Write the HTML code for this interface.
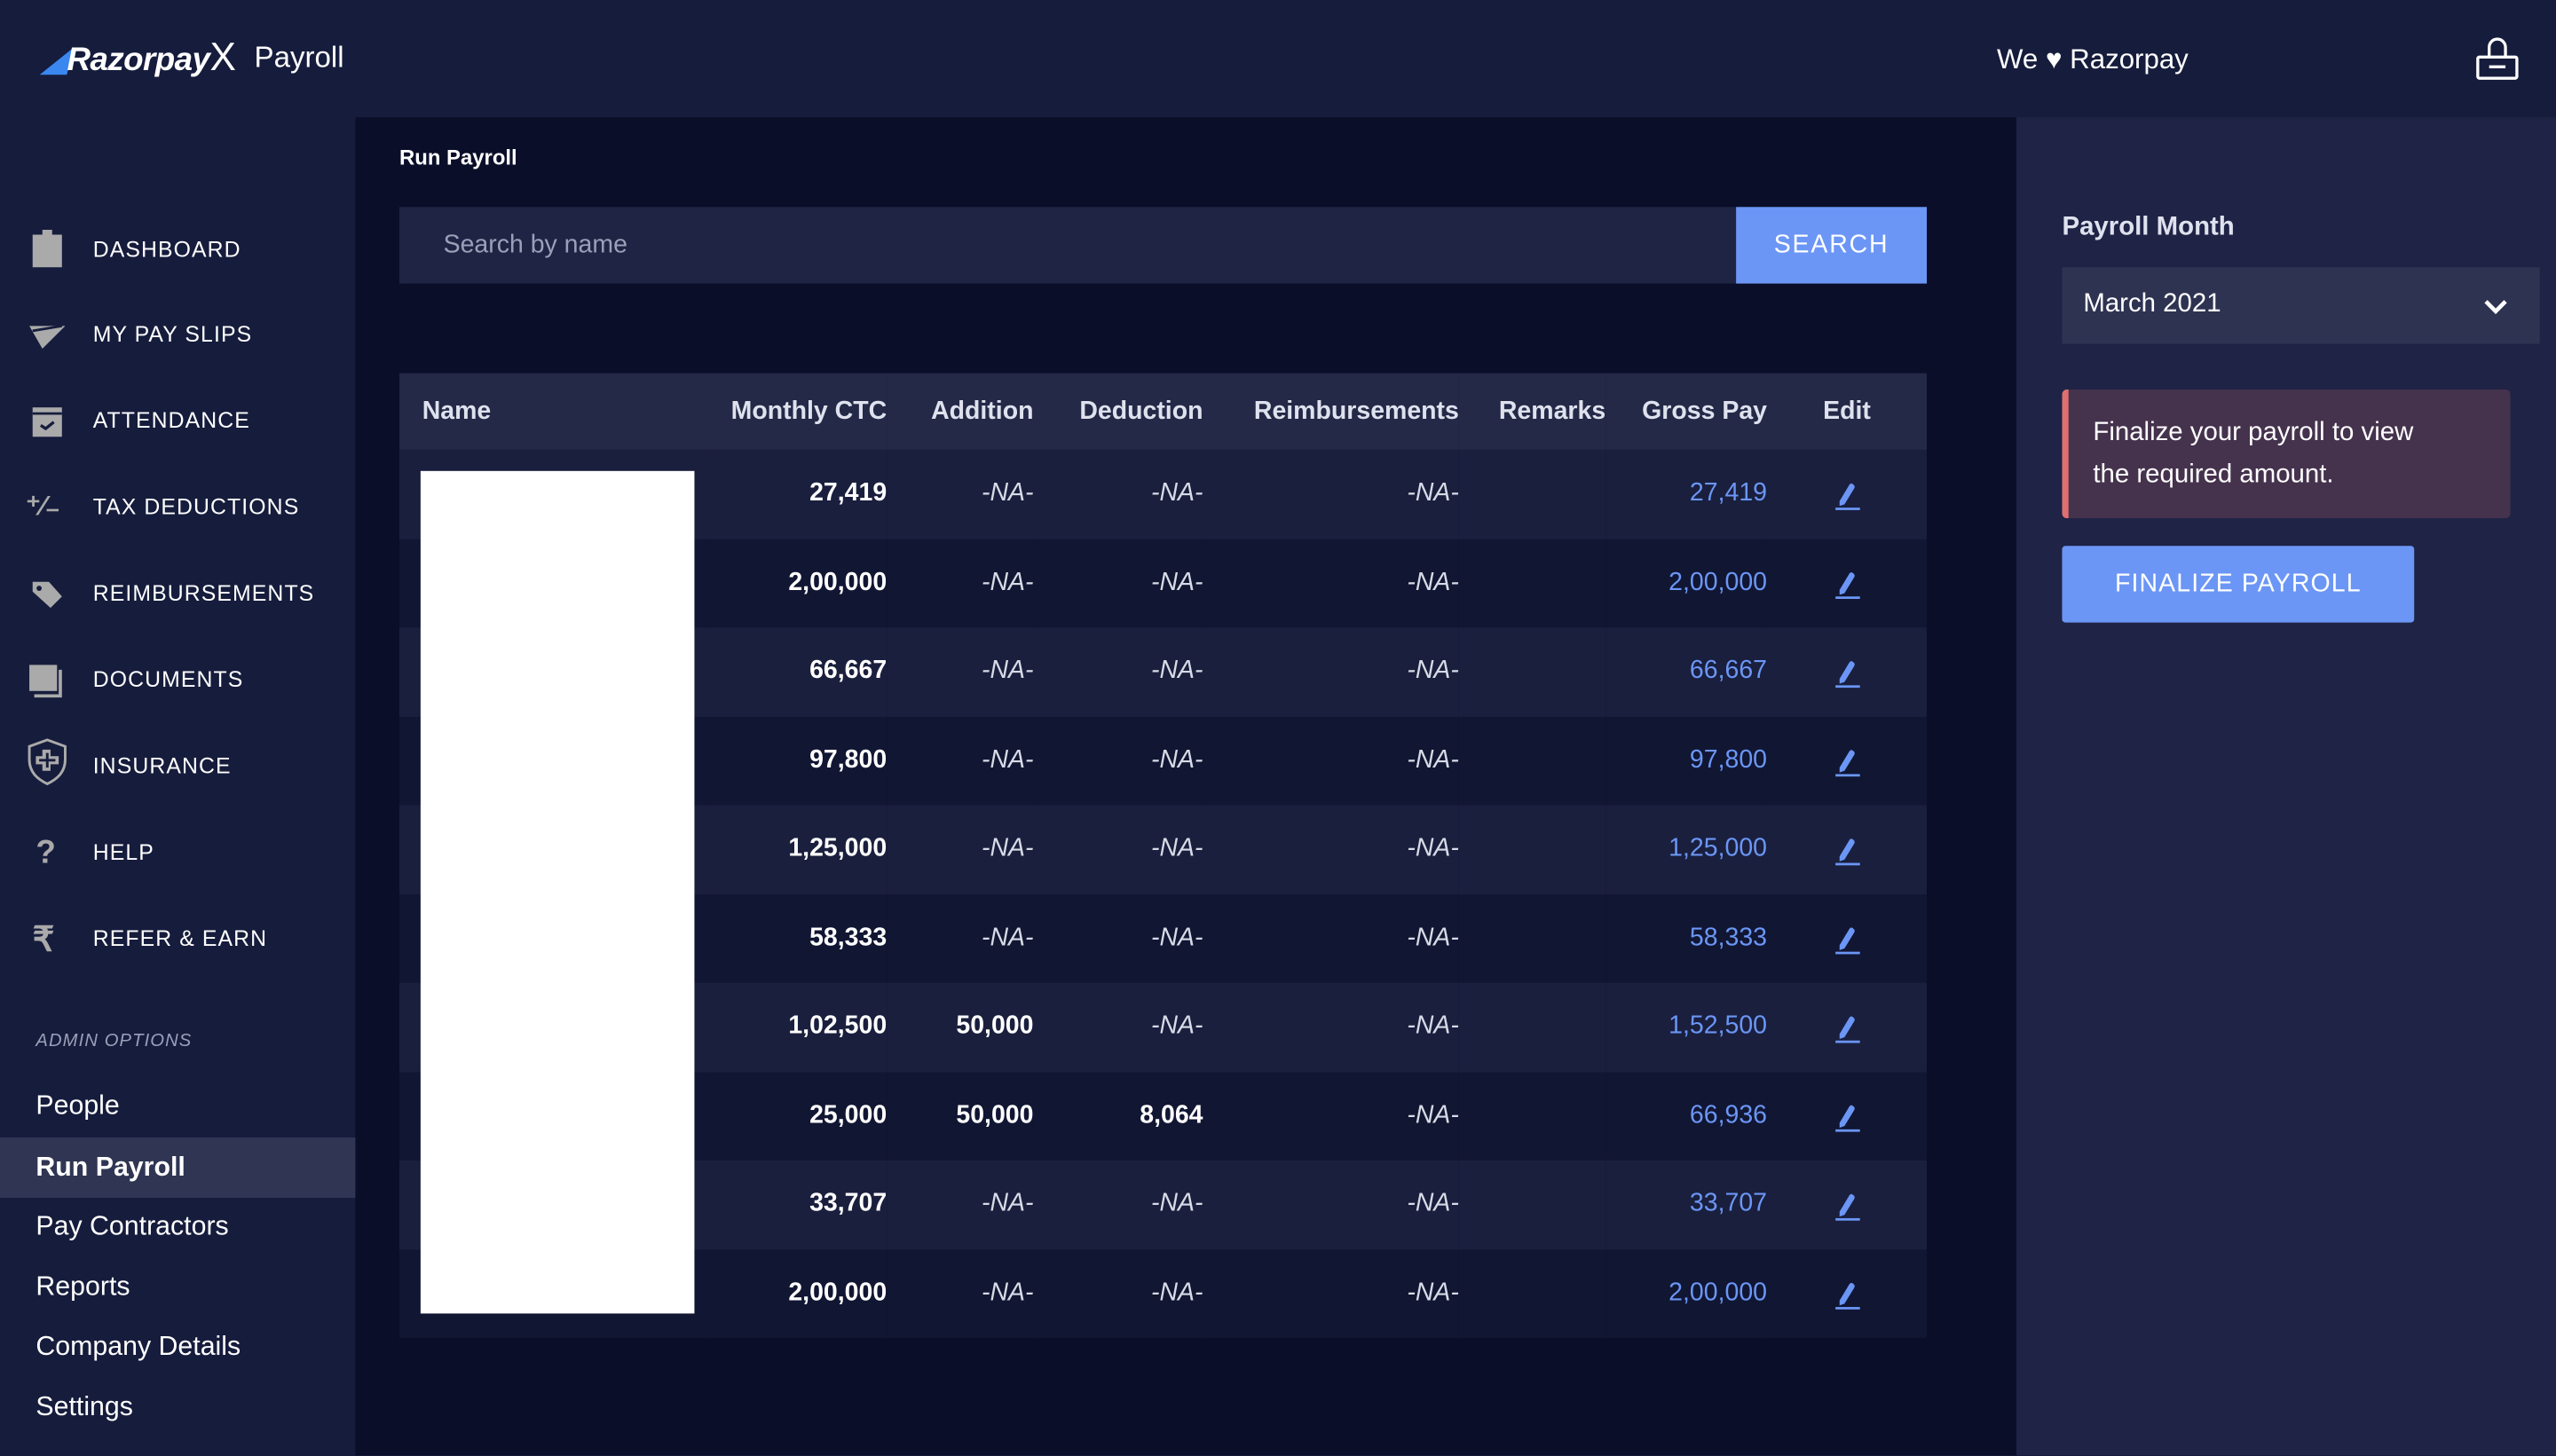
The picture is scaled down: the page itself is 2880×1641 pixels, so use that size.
<!DOCTYPE html>
<html><head><meta charset="utf-8"><style>
*{margin:0;padding:0;box-sizing:border-box}
html,body{width:2880px;height:1641px;overflow:hidden;background:#161c3c}
#w{width:1568px;height:893px;transform:scale(1.836735);transform-origin:0 0;position:relative;font-family:"Liberation Sans",sans-serif;color:#fff;background:#161c3c}
.a{position:absolute}
.nav{position:absolute;left:57px;font-size:13.5px;letter-spacing:0.6px;transform:translateY(-50%)}
.ic{position:absolute;left:16px;width:26px;transform:translateY(-50%)}
.adm{position:absolute;left:22px;font-size:16.5px;transform:translateY(-50%)}
table{border-collapse:collapse;position:absolute;left:245px;top:229px;width:937px}
td,th{height:54.5px;font-size:15.5px;text-align:right;padding:0}
th{height:47px;background:#242947;font-weight:bold;color:#dfe2ee}
tr:nth-child(even) td{background:#1a1f3e}
tr:nth-child(odd) td{background:#111633}
td{font-weight:bold}
td.na{font-style:italic;font-weight:normal;color:#d8dbe6}
td.g{color:#6b96f5;font-weight:normal}
</style></head><body><div id="w">
<div class="a" style="left:26px;top:22px;font-size:20px;font-weight:bold;font-style:italic;letter-spacing:-0.3px">
<span style="color:#3a87f0">◢</span>Razorpay<span style="color:#fff;font-style:normal;font-size:24px;font-weight:normal">X</span></div>
<div class="a" style="left:156px;top:25px;font-size:18px">Payroll</div>
<div class="a" style="left:1225px;top:27px;font-size:17px">We ♥ Razorpay</div>
<svg class="a" style="left:1518px;top:22px" width="28" height="28" viewBox="0 0 28 28" fill="none" stroke="#fff" stroke-width="1.8"><rect x="2" y="13" width="24" height="13" rx="1"/><path d="M9 13V7a5 5 0 0 1 10 0v6M9 19h10"/></svg>
<div class="a" style="left:218px;top:72px;width:1019px;height:821px;background:#0a0e29"></div>
<div class="a" style="left:1237px;top:72px;width:331px;height:821px;background:#1f2345"></div>
<svg class="ic" style="top:153px" width="26" height="24" viewBox="0 0 26 24"><rect x="4" y="3" width="18" height="20" fill="#aaa"/><rect x="10" y="0" width="6" height="4" fill="#aaa"/></svg>
<div class="nav" style="top:153px">DASHBOARD</div>
<svg class="ic" style="top:207px" width="26" height="18" viewBox="0 0 26 18"><path d="M2 2h22L10 16z" fill="#aaa"/><path d="M4 5l18-3" stroke="#161c3c" stroke-width="1.5"/></svg>
<div class="nav" style="top:205px">MY PAY SLIPS</div>
<svg class="ic" style="top:259px" width="26" height="20" viewBox="0 0 26 20"><rect x="4" y="1" width="18" height="18" fill="#aaa"/><rect x="4" y="4" width="18" height="1.5" fill="#161c3c"/><path d="M9 12l3 2 5-4" stroke="#161c3c" stroke-width="1.8" fill="none"/></svg>
<div class="nav" style="top:258px">ATTENDANCE</div>
<div class="ic" style="top:311px;color:#aaa;font-weight:bold;font-size:17px">⁺⁄₋</div>
<div class="nav" style="top:311px">TAX DEDUCTIONS</div>
<svg class="ic" style="top:365px" width="26" height="22" viewBox="0 0 26 22"><path d="M4 3h10l8 9-7 7L4 9z" fill="#aaa"/><circle cx="8" cy="7" r="1.6" fill="#161c3c"/></svg>
<div class="nav" style="top:364px">REIMBURSEMENTS</div>
<svg class="ic" style="top:418px" width="26" height="24" viewBox="0 0 26 24"><rect x="2" y="2" width="17" height="16" fill="#aaa"/><path d="M21 5v16H5" stroke="#aaa" stroke-width="2" fill="none"/></svg>
<div class="nav" style="top:417px">DOCUMENTS</div>
<svg class="ic" style="top:468px" width="26" height="32" viewBox="0 0 26 32"><path d="M2 6l11-4 11 4v8c0 8-5 12-11 15C7 26 2 22 2 14z" stroke="#aaa" stroke-width="1.6" fill="none"/><path d="M6 12h14v5H6z" fill="#aaa"/><path d="M10 8h5v13h-5z" fill="#aaa"/><path d="M8 14.5h10M13 10v9" stroke="#161c3c" stroke-width="1.6"/></svg>
<div class="nav" style="top:470px">INSURANCE</div>
<div class="ic" style="top:524px;color:#aaa;font-weight:bold;font-size:20px;padding-left:6px">?</div>
<div class="nav" style="top:523px">HELP</div>
<div class="ic" style="top:577px;color:#aaa;font-weight:bold;font-size:21px;padding-left:4px">₹</div>
<div class="nav" style="top:576px">REFER &amp; EARN</div>
<div class="a" style="left:22px;top:633px;font-size:11px;font-style:italic;letter-spacing:0.6px;color:#9aa0b8">ADMIN OPTIONS</div>
<div class="adm" style="top:679px">People</div>
<div class="a" style="left:0;top:698px;width:218px;height:37px;background:#2f3553"></div>
<div class="adm" style="top:717px;font-weight:bold">Run Payroll</div>
<div class="adm" style="top:753px">Pay Contractors</div>
<div class="adm" style="top:790px">Reports</div>
<div class="adm" style="top:827px">Company Details</div>
<div class="adm" style="top:864px">Settings</div>
<div class="a" style="left:245px;top:89px;font-size:13px;font-weight:bold">Run Payroll</div>
<div class="a" style="left:245px;top:127px;width:820px;height:47px;background:#1f2444"></div>
<div class="a" style="left:272px;top:142px;font-size:15.5px;color:#9aa0b8">Search by name</div>
<div class="a" style="left:1065px;top:127px;width:117px;height:47px;background:#6b96f5;font-size:15.5px;letter-spacing:1px;text-align:center;line-height:47px">SEARCH</div>
<table>
<tr><th style="text-align:left;padding-left:14px;width:190px">Name</th><th style="width:109px">Monthly CTC</th><th style="width:90px">Addition</th><th style="width:104px">Deduction</th><th style="width:157px">Reimbursements</th><th style="width:90px">Remarks</th><th style="width:99px">Gross Pay</th><th style="text-align:center">Edit</th></tr>
<tr><td></td><td>27,419</td><td class="na">-NA-</td><td class="na">-NA-</td><td class="na">-NA-</td><td></td><td class="g">27,419</td><td></td></tr>
<tr><td></td><td>2,00,000</td><td class="na">-NA-</td><td class="na">-NA-</td><td class="na">-NA-</td><td></td><td class="g">2,00,000</td><td></td></tr>
<tr><td></td><td>66,667</td><td class="na">-NA-</td><td class="na">-NA-</td><td class="na">-NA-</td><td></td><td class="g">66,667</td><td></td></tr>
<tr><td></td><td>97,800</td><td class="na">-NA-</td><td class="na">-NA-</td><td class="na">-NA-</td><td></td><td class="g">97,800</td><td></td></tr>
<tr><td></td><td>1,25,000</td><td class="na">-NA-</td><td class="na">-NA-</td><td class="na">-NA-</td><td></td><td class="g">1,25,000</td><td></td></tr>
<tr><td></td><td>58,333</td><td class="na">-NA-</td><td class="na">-NA-</td><td class="na">-NA-</td><td></td><td class="g">58,333</td><td></td></tr>
<tr><td></td><td>1,02,500</td><td>50,000</td><td class="na">-NA-</td><td class="na">-NA-</td><td></td><td class="g">1,52,500</td><td></td></tr>
<tr><td></td><td>25,000</td><td>50,000</td><td>8,064</td><td class="na">-NA-</td><td></td><td class="g">66,936</td><td></td></tr>
<tr><td></td><td>33,707</td><td class="na">-NA-</td><td class="na">-NA-</td><td class="na">-NA-</td><td></td><td class="g">33,707</td><td></td></tr>
<tr><td></td><td>2,00,000</td><td class="na">-NA-</td><td class="na">-NA-</td><td class="na">-NA-</td><td></td><td class="g">2,00,000</td><td></td></tr>
</table>
<div class="a" style="left:258px;top:289px;width:168px;height:517px;background:#fff"></div>
<svg class="a" style="left:1124px;top:294px" width="18" height="520" viewBox="0 0 18 520">
<defs><g id="p"><path d="M4.5 13.5L10.5 3.5Q11.5 2 12.8 3.2L13.6 4Q14 5 13.3 6L7.5 15.5L4.5 16.5Z" fill="#6b96f5"/><rect x="2" y="17.5" width="15" height="1.5" fill="#6b96f5"/></g></defs>
<use href="#p" y="0"/><use href="#p" y="54.5"/><use href="#p" y="109"/><use href="#p" y="163.5"/><use href="#p" y="218"/><use href="#p" y="272.5"/><use href="#p" y="327"/><use href="#p" y="381.5"/><use href="#p" y="436"/><use href="#p" y="490.5"/></svg>
<div class="a" style="left:1265px;top:131px;font-size:16px;font-weight:bold;color:#dfe2ee">Payroll Month</div>
<div class="a" style="left:1265px;top:164px;width:293px;height:47px;background:#2e3352"></div>
<div class="a" style="left:1278px;top:178px;font-size:16px">March 2021</div>
<svg class="a" style="left:1523px;top:182px" width="16" height="12" viewBox="0 0 16 12"><path d="M2 3l6 6 6-6" stroke="#fff" stroke-width="2.5" fill="none"/></svg>
<div class="a" style="left:1265px;top:239px;width:275px;height:79px;background:#45324d;border-left:4px solid #e07070;border-radius:3px;padding:14px 0 0 15px;font-size:16px;line-height:26px"><div style="width:215px">Finalize your payroll to view the required amount.</div></div>
<div class="a" style="left:1265px;top:335px;width:216px;height:47px;background:#6b96f5;border-radius:2px;text-align:center;line-height:47px;font-size:15.5px;letter-spacing:0.6px">FINALIZE PAYROLL</div>
</div></body></html>
